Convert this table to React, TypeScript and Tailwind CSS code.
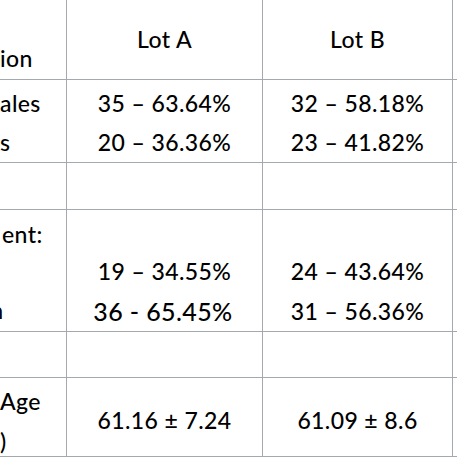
const rule = 'border-[#a3a9ae]';

function Cell({ className = '', children }: { className?: string; children?: React.ReactNode }) {
  return <div className={`overflow-hidden border-b border-r ${rule} ${className}`}>{children}</div>;
}

function Edge() {
  return <div className={`border-b ${rule}`} />;
}

function Frag({ children, className = '' }: { children: React.ReactNode; className?: string }) {
  return <div className={`whitespace-nowrap h-[22px] leading-[22px] ${className}`}>{children}</div>;
}

export default function App() {
  return (
    <div className="w-[457px] h-[457px] overflow-hidden bg-white text-black font-['Lato',sans-serif] font-medium text-[23px] tracking-[0.4px]">
      <div className="grid grid-cols-[67px_196px_190px_1fr] grid-rows-[80px_83px_47px_122px_46px_1fr] h-[457px]">
        {/* header */}
        <Cell className="pt-[47px]">
          <Frag>ion</Frag>
        </Cell>
        <Cell className="pt-[28px] text-center leading-[22px]">Lot A</Cell>
        <Cell className="pt-[28px] text-center leading-[22px]">Lot B</Cell>
        <Edge />

        {/* gender */}
        <Cell className="pt-[12px] flex flex-col gap-[17px]">
          <Frag>ales</Frag>
          <Frag>s</Frag>
        </Cell>
        <Cell className="pt-[12px] flex flex-col gap-[17px] items-center leading-[22px]">
          <div>35 – 63.64%</div>
          <div>20 – 36.36%</div>
        </Cell>
        <Cell className="pt-[12px] flex flex-col gap-[17px] items-center leading-[22px]">
          <div>32 – 58.18%</div>
          <div>23 – 41.82%</div>
        </Cell>
        <Edge />

        {/* spacer */}
        <Cell />
        <Cell />
        <Cell />
        <Edge />

        {/* treatment */}
        <Cell className="pt-[13px] flex flex-col gap-[54px]">
          <Frag className="pl-[2px]">ent:</Frag>
          <Frag className="font-bold -ml-[10px]">n</Frag>
        </Cell>
        <Cell className="pt-[50px] flex flex-col gap-[18px] items-center leading-[22px]">
          <div>19 – 34.55%</div>
          <div className="text-[25px] pr-[3px]">36 - 65.45%</div>
        </Cell>
        <Cell className="pt-[50px] flex flex-col gap-[18px] items-center leading-[22px]">
          <div>24 – 43.64%</div>
          <div>31 – 56.36%</div>
        </Cell>
        <Edge />

        {/* spacer */}
        <Cell />
        <Cell />
        <Cell />
        <Edge />

        {/* age */}
        <Cell className="pt-[12px] flex flex-col gap-[18px]">
          <Frag>Age</Frag>
          <Frag>)</Frag>
        </Cell>
        <Cell className="pt-[31px] text-center leading-[22px]">61.16 ± 7.24</Cell>
        <Cell className="pt-[31px] text-center leading-[22px]">61.09 ± 8.6</Cell>
        <Edge />
      </div>
    </div>
  );
}
